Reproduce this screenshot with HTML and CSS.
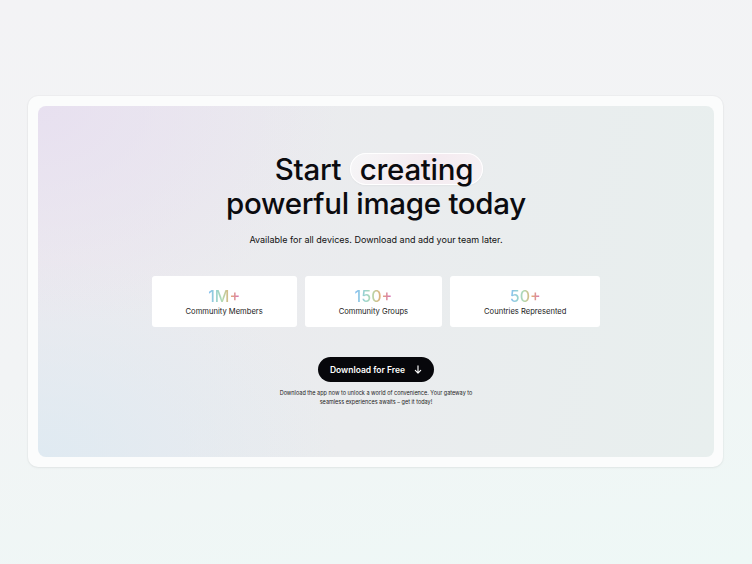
FILE: index.html
```html
<!DOCTYPE html>
<html>
<head>
<meta charset="utf-8">
<link rel="stylesheet" href="styles.css">
</head>
<body>
<div class="page">
  <div class="frame">
    <section class="panel">
      <h1 class="title"><span class="line">Start <span class="pill">creating</span></span><span class="line">powerful image today</span></h1>
      <p class="sub">Available for all devices. Download and add your team later.</p>
      <div class="stats">
        <div class="stat"><div class="num">1M+</div><div class="label">Community Members</div></div>
        <div class="stat"><div class="num">150+</div><div class="label">Community Groups</div></div>
        <div class="stat"><div class="num">50+</div><div class="label">Countries Represented</div></div>
      </div>
      <button class="cta">Download for Free
        <svg width="8" height="9" viewBox="0 0 9 10" fill="none" stroke="#fff" stroke-width="1.3" stroke-linecap="round" stroke-linejoin="round"><path d="M4.5 1v8M1.5 6l3 3 3-3"/></svg>
      </button>
      <p class="note">Download the app now to unlock a world of convenience. Your gateway to<br>seamless experiences awaits – get it today!</p>
    </section>
  </div>
</div>
</body>
</html>
```
FILE: styles.css
```css
* { box-sizing: border-box; }
html, body { margin: 0; padding: 0; }
body {
  width: 752px; height: 564px; overflow: hidden;
  font-family: Inter, "Noto Sans", sans-serif;
  background: linear-gradient(170deg, #f3f3f5 0%, #f2f4f5 55%, #eef8f6 100%);
}
.page { padding: 96px 29px 0 28px; }
.frame {
  background: #fbfcfc;
  border-radius: 10px;
  padding: 10px 9px 10px 10px;
  box-shadow: 0 1px 3px rgba(0,0,0,0.05), 0 0 0 1px rgba(0,0,0,0.02);
  height: 371px;
}
.panel {
  height: 351px;
  border-radius: 8px;
  background:
    radial-gradient(ellipse 300px 220px at 0% 0%, rgba(231,223,240,0.9), rgba(231,223,240,0) 100%),
    radial-gradient(ellipse 300px 200px at 0% 100%, rgba(222,234,242,0.9), rgba(222,234,242,0) 100%),
    linear-gradient(100deg, #eceaef 0%, #eaecee 50%, #e8efee 100%);
  display: flex; flex-direction: column; align-items: center;
  padding-top: 46px;
}
.title {
  margin: 0;
  font-size: 29.5px; font-weight: 500;
  letter-spacing: -0.3px;
  color: #0b0b0f; text-align: center;
  display: flex; flex-direction: column; align-items: center;
}
.line { display: block; height: 34px; line-height: 34px; }
.line:first-child { padding-left: 6px; }
.pill {
  display: inline-block;
  padding: 0 10px;
  margin-left: 1px;
  border-radius: 16px;
  background: linear-gradient(120deg, rgba(255,255,255,0.55), rgba(246,234,240,0.9) 55%, rgba(250,244,247,0.75));
  box-shadow: inset 0 0 0 1px rgba(255,255,255,0.95), 0 1px 2px rgba(0,0,0,0.04);
  line-height: 32px; height: 32px;
  vertical-align: top; margin-top: 1px;
}
.sub {
  margin: 14px 0 0;
  font-size: 9px; line-height: 12px; color: #111;
}
.stats {
  display: flex; gap: 8px;
  margin-top: 30px;
}
.stat {
  background: #fff;
  border-radius: 3px;
  padding: 10px 34px 0;
  height: 51px;
  text-align: center;
}
.num {
  font-size: 16px; font-weight: 500; line-height: 18px;
  background: linear-gradient(90deg, #86bff4 0%, #98d2d0 25%, #b4dab0 45%, #e2ae74 70%, #d86cc0 100%);
  -webkit-background-clip: text; background-clip: text;
  color: transparent;
  display: inline-block;
}
.label {
  margin-top: 1px;
  font-size: 7.6px; color: #1a1a1a;
}
.cta {
  margin-top: 30px;
  background: #07070b; color: #fff;
  border: 0; border-radius: 13px;
  height: 25px; padding: 0 12px 0 12px;
  font-family: Inter, sans-serif; font-size: 8.5px; font-weight: 600;
  display: flex; align-items: center; gap: 9px;
}
.note {
  margin: 7px 0 0;
  white-space: nowrap;
  font-size: 5.5px; line-height: 9px; color: #222; text-align: center;
}
```
